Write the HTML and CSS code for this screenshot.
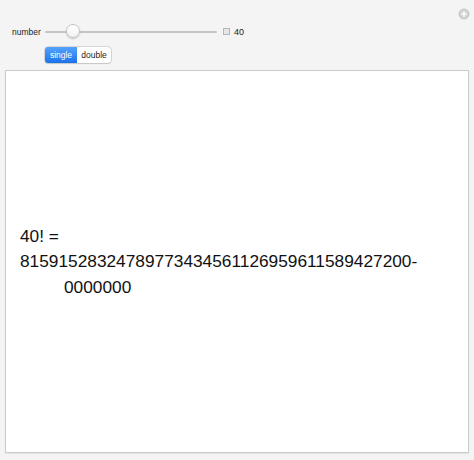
FILE: index.html
```html
<!DOCTYPE html>
<html>
<head>
<meta charset="utf-8">
<link rel="stylesheet" href="styles.css">
</head>
<body>
<div class="app">
  <div class="controls">
    <svg class="addbtn" width="12" height="12" viewBox="0 0 12 12">
      <circle cx="6" cy="6" r="5" fill="#d2d2d2" stroke="#bdbdbd" stroke-width="0.8"/>
      <path d="M6 3.2V8.8M3.2 6H8.8" stroke="#ffffff" stroke-width="1.6"/>
    </svg>
    <div class="row slider-row">
      <span class="label">number</span>
      <div class="track">
        <div class="thumb"></div>
      </div>
      <span class="plusbox"></span>
      <span class="value">40</span>
    </div>
    <div class="row seg-row">
      <div class="seg">
        <span class="seg-btn active">single</span>
        <span class="seg-btn">double</span>
      </div>
    </div>
  </div>
  <div class="panel">
    <div class="output">
      <div class="line">40! =</div>
      <div class="line">81591528324789773434561126959611589427200-</div>
      <div class="line indent">0000000</div>
    </div>
  </div>
</div>
</body>
</html>
```
FILE: styles.css
```css
html, body {
  margin: 0;
  padding: 0;
  background: #f4f4f4;
}
.app {
  width: 474px;
  height: 460px;
  font-family: "Liberation Sans", Arial, sans-serif;
  color: #1a1a1a;
}
.controls {
  position: relative;
  height: 70px;
  box-sizing: border-box;
  padding-top: 23px;
}
.addbtn {
  position: absolute;
  left: 458px;
  top: 8px;
}
.row {
  display: flex;
  align-items: center;
}
.slider-row {
  height: 17px;
  padding-left: 12px;
}
.label {
  font-size: 8.5px;
  width: 33px;
  color: #222;
}
.track {
  position: relative;
  width: 172px;
  height: 2px;
  background: #c4c4c4;
  border-radius: 1px;
}
.thumb {
  position: absolute;
  left: 21px;
  top: -7px;
  width: 14px;
  height: 14px;
  box-sizing: border-box;
  border-radius: 50%;
  background: linear-gradient(#ffffff, #f1f1f1);
  border: 1px solid #c4c4c4;
  box-shadow: 0 1px 1.5px rgba(0,0,0,0.2);
}
.plusbox {
  width: 5px;
  height: 5px;
  margin-left: 6px;
  border: 1px solid #b5b5b5;
  background: #e6e6e6;
}
.value {
  font-size: 9px;
  margin-left: 4px;
  color: #222;
}
.seg-row {
  margin-top: 7px;
  padding-left: 45px;
}
.seg {
  display: flex;
  height: 16px;
  border-radius: 3px;
  box-shadow: 0 0 0 0.5px #b8b8b8, 0 1px 1px rgba(0,0,0,0.12);
  overflow: hidden;
  background: #fff;
}
.seg-btn {
  display: flex;
  align-items: center;
  justify-content: center;
  font-size: 8.5px;
  color: #222;
  padding: 0 4px;
}
.seg-btn.active {
  width: 24px;
  background: linear-gradient(#54a2fb, #1b73ec);
  color: #fff;
}
.seg-btn:last-child {
  width: 26px;
}
.panel {
  margin-left: 5px;
  width: 464px;
  height: 383px;
  box-sizing: border-box;
  background: #fff;
  border: 1px solid #cbcbcb;
  box-shadow: 0 1px 1px rgba(0,0,0,0.06);
  display: flex;
  align-items: center;
}
.output {
  padding-left: 14px;
  margin-top: 1px;
  font-size: 17.3px;
  color: #111;
}
.line {
  line-height: 25.5px;
  white-space: nowrap;
}
.indent {
  padding-left: 44px;
}
```
